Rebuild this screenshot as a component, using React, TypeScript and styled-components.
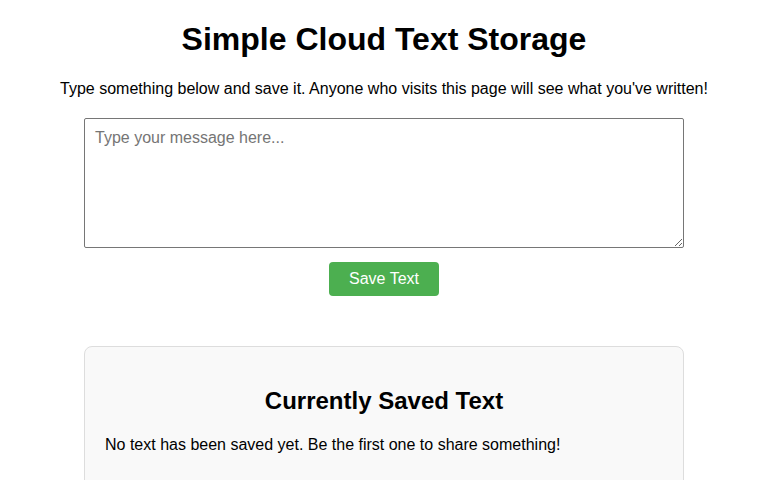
import React from "react";
import styled, { createGlobalStyle } from "styled-components";

const Global = createGlobalStyle`
  html, body { margin: 0; padding: 0; background: #fff; }
  body { font-family: "Liberation Sans", Arial, sans-serif; color: #000; }
  * { box-sizing: border-box; }
`;

const Page = styled.main`
  display: flex;
  flex-direction: column;
  align-items: center;
  padding: 21px 20px 0;
`;

const Title = styled.h1`
  font-size: 32px;
  font-weight: bold;
  line-height: 37px;
  margin: 0 0 22px;
  text-align: center;
`;

const Intro = styled.p`
  font-size: 16px;
  line-height: 18px;
  margin: 0 0 20px;
  text-align: center;
`;

const TextArea = styled.textarea`
  display: block;
  width: 600px;
  height: 130px;
  padding: 10px;
  font-family: "Liberation Sans", Arial, sans-serif;
  font-size: 16px;
  line-height: 18px;
  border: 1px solid #767676;
  border-radius: 2px;
  resize: vertical;
  margin: 0;
  &::placeholder { color: #757575; }
`;

const SaveButton = styled.button`
  margin-top: 14px;
  height: 34px;
  padding: 0 20px;
  background: #4caf50;
  color: #fff;
  border: none;
  border-radius: 4px;
  font-family: "Liberation Sans", Arial, sans-serif;
  font-size: 16px;
  cursor: pointer;
`;

const SavedBox = styled.section`
  margin-top: 50px;
  width: 600px;
  padding: 20px;
  background: #f9f9f9;
  border: 1px solid #ddd;
  border-radius: 8px;
`;

const SavedTitle = styled.h2`
  font-size: 24px;
  font-weight: bold;
  line-height: 28px;
  margin: 20px 0 21px;
  text-align: center;
`;

const SavedText = styled.p`
  font-size: 16px;
  line-height: 18px;
  margin: 0 0 16px;
`;

export default function App() {
  return (
    <>
      <Global />
      <Page>
        <Title>Simple Cloud Text Storage</Title>
        <Intro>Type something below and save it. Anyone who visits this page will see what you've written!</Intro>
        <TextArea placeholder="Type your message here..." />
        <SaveButton>Save Text</SaveButton>
        <SavedBox>
          <SavedTitle>Currently Saved Text</SavedTitle>
          <SavedText>No text has been saved yet. Be the first one to share something!</SavedText>
        </SavedBox>
      </Page>
    </>
  );
}
